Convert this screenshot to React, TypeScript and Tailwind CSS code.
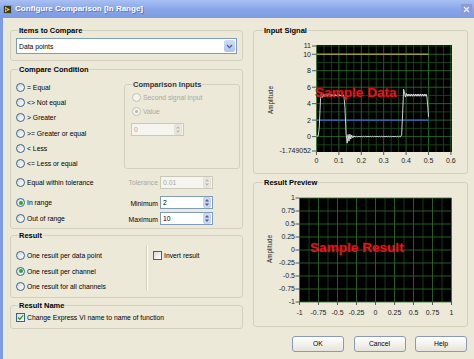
import React from "react";

type RP = { checked?: boolean; disabled?: boolean };

function Radio({ checked = false, disabled = false }: RP) {
  return (
    <span
      className={
        disabled
          ? "w-[9px] h-[9px] rounded-full border border-[#c5c2b3] bg-[#f4f3ee] flex items-center justify-center shrink-0"
          : "w-[9px] h-[9px] rounded-full border border-[#33639a] bg-linear-to-br from-[#d8d7cf] to-white flex items-center justify-center shrink-0"
      }
    >
      {checked && (
        <span
          className={
            disabled
              ? "w-[3px] h-[3px] rounded-full bg-[#b5b3a6]"
              : "w-[4px] h-[4px] rounded-full bg-[#2ea32e]"
          }
        />
      )}
    </span>
  );
}

function Check({ checked = false }: { checked?: boolean }) {
  return (
    <span className="w-[9px] h-[9px] border border-[#33639a] bg-linear-to-br from-[#dcdbd3] to-white flex items-center justify-center shrink-0">
      {checked && (
        <svg width="7" height="7" viewBox="0 0 7 7">
          <path d="M1 3.4 L2.8 5.3 L6.2 1.4" fill="none" stroke="#21a121" strokeWidth="1.4" />
        </svg>
      )}
    </span>
  );
}

function RadioRow({
  label,
  checked,
  disabled,
  cls,
}: {
  label: string;
  checked?: boolean;
  disabled?: boolean;
  cls: string;
}) {
  return (
    <div className={`flex items-center gap-[2px] ${cls}`}>
      <Radio checked={checked} disabled={disabled} />
      <span className={disabled ? "text-[#aca899]" : "text-black"}>{label}</span>
    </div>
  );
}

function SpinArrows({ disabled = false }: { disabled?: boolean }) {
  const bg = disabled ? "#e9e8e0" : "#c9d6f6";
  const fg = disabled ? "#bdbbae" : "#4d6185";
  return (
    <svg width="8" height="11" viewBox="0 0 8 11" className="mr-[1px] shrink-0">
      <rect x="0.5" y="0.5" width="7" height="10" rx="1.5" fill={bg} stroke={disabled ? "#d8d6ca" : "#b3c3ea"} strokeWidth="0.6" />
      <path d="M4 2 L2 4.4 L6 4.4 Z" fill={fg} />
      <path d="M2 6.6 L6 6.6 L4 9 Z" fill={fg} />
    </svg>
  );
}

function Spin({ value, disabled = false, cls }: { value: string; disabled?: boolean; cls: string }) {
  return (
    <div
      className={
        disabled
          ? `flex items-center justify-between h-[13px] border border-[#cbc8b8] bg-[#f5f4ef] text-[#aca899] ${cls}`
          : `flex items-center justify-between h-[13px] border border-[#7f9db9] bg-white text-black ${cls}`
      }
    >
      <span className="pl-[2px] leading-[11px]">{value}</span>
      <SpinArrows disabled={disabled} />
    </div>
  );
}

const legendCls = "ml-[2px] px-[1px] text-[7.5px] leading-[9px] font-bold text-black";

function TitleBar() {
  return (
    <div className="h-[18px] shrink-0 flex items-center bg-linear-to-b from-[#a9c0f3] via-[#8aa6e9] to-[#7d9ae3]">
      <svg width="9" height="9" viewBox="0 0 9 9" className="ml-[3px] shrink-0">
        <rect x="0" y="0" width="9" height="9" fill="#3a3a1e" />
        <rect x="0.5" y="0.5" width="8" height="8" fill="none" stroke="#c8b84a" strokeWidth="0.8" />
        <path d="M2 1.8 L7 4.5 L2 7.2 Z" fill="#f1d52a" />
        <rect x="2.6" y="3.6" width="1.6" height="1.8" fill="#3a3a1e" />
      </svg>
      <span className="ml-[3px] text-[8px] font-bold text-white leading-[10px] [text-shadow:1px_1px_0_#5a76c0]">
        Configure Comparison [In Range]
      </span>
      <div className="ml-auto mr-[2px] w-[11px] h-[11px] rounded-[1px] bg-[#8d9ad8] flex items-center justify-center">
        <svg width="7" height="7" viewBox="0 0 7 7">
          <path d="M1 1 L6 6 M6 1 L1 6" stroke="#eef0fb" strokeWidth="1.2" />
        </svg>
      </div>
    </div>
  );
}

function LeftColumn() {
  return (
    <div className="w-[233px] flex flex-col">
      {/* Items to Compare */}
      <fieldset className="mt-[8px] border border-[#d3d0c2] rounded-[3px] px-[5px] pb-[6px]">
        <legend className={legendCls}>Items to Compare</legend>
        <div className="mt-[3px] h-[16px] border border-[#7f9db9] bg-white flex items-center justify-between">
          <span className="pl-[2px]">Data points</span>
          <div className="mr-[1px] w-[11px] h-[12px] rounded-[2px] bg-linear-to-b from-[#cfdcfa] to-[#aec4f3] flex items-center justify-center">
            <svg width="7" height="5" viewBox="0 0 7 5">
              <path d="M1 1 L3.5 3.6 L6 1" fill="none" stroke="#4d6185" strokeWidth="1.3" />
            </svg>
          </div>
        </div>
      </fieldset>

      {/* Compare Condition */}
      <fieldset className="mt-[4px] border border-[#d3d0c2] rounded-[3px] pl-[5px] pr-[2px] pb-[3px]">
        <legend className={legendCls}>Compare Condition</legend>
        <div className="mt-[6px] flex items-start">
          <div className="w-[108px] flex flex-col">
            <RadioRow cls="h-[15.2px]" label="= Equal" />
            <RadioRow cls="h-[15.2px]" label="<> Not equal" />
            <RadioRow cls="h-[15.2px]" label="> Greater" />
            <RadioRow cls="h-[15.2px]" label=">= Greater or equal" />
            <RadioRow cls="h-[15.2px]" label="< Less" />
            <RadioRow cls="h-[15.2px]" label="<= Less or equal" />
          </div>
          <fieldset className="w-[116px] h-[89px] border border-[#d3d0c2] rounded-[3px] pl-[6px]">
            <legend className="ml-[1px] px-[1px] text-[7.5px] leading-[9px] font-bold text-[#333]">Comparison Inputs</legend>
            <div className="mt-[1px] flex flex-col">
              <RadioRow cls="h-[14.5px] pl-[1px]" label="Second signal input" disabled />
              <RadioRow cls="h-[14.5px] pl-[1px]" label="Value" checked disabled />
            </div>
            <Spin value="0" disabled cls="mt-[4px] w-[53px]" />
          </fieldset>
        </div>
        <div className="mt-[5px] flex flex-col">
          <div className="h-[13px] flex items-center">
            <RadioRow cls="w-[108px] h-[13px]" label="Equal within tolerance" />
            <span className="w-[36px] text-right pr-[2px] text-[#aca899]">Tolerance</span>
            <Spin value="0.01" disabled cls="w-[53px]" />
          </div>
          <div className="mt-[7px] h-[13px] flex items-center">
            <RadioRow cls="w-[108px] h-[13px]" label="In range" checked />
            <span className="w-[36px] text-right pr-[2px] pt-[2px]">Minimum</span>
            <Spin value="2" cls="w-[53px]" />
          </div>
          <div className="mt-[3px] h-[13px] flex items-center">
            <RadioRow cls="w-[108px] h-[13px]" label="Out of range" />
            <span className="w-[36px] text-right pr-[2px] pt-[2px]">Maximum</span>
            <Spin value="10" cls="w-[53px]" />
          </div>
        </div>
      </fieldset>

      {/* Result */}
      <fieldset className="mt-[2px] border border-[#d3d0c2] rounded-[3px] px-[5px] pb-[2px]">
        <legend className={legendCls}>Result</legend>
        <div className="mt-[8px] flex items-start">
          <div className="w-[130px] flex flex-col">
            <RadioRow cls="h-[15.5px]" label="One result per data point" />
            <RadioRow cls="h-[15.5px]" label="One result per channel" checked />
            <RadioRow cls="h-[15.5px]" label="One result for all channels" />
          </div>
          <div className="-mt-[3px] w-[2px] h-[45px] border-l border-l-[#d3d0c2] border-r border-r-white" />
          <div className="ml-[5px] h-[15.5px] flex items-center gap-[2px]">
            <Check />
            <span>Invert result</span>
          </div>
        </div>
      </fieldset>

      {/* Result Name */}
      <fieldset className="mt-[3px] border border-[#d3d0c2] rounded-[3px] px-[5px] pb-[3px]">
        <legend className={legendCls}>Result Name</legend>
        <div className="h-[15px] flex items-center gap-[2px]">
          <Check checked />
          <span>Change Express VI name to name of function</span>
        </div>
      </fieldset>
    </div>
  );
}

const FONT = "Liberation Sans, Arial, sans-serif";

function range(a: number, b: number, step: number) {
  const r: number[] = [];
  for (let v = a; v <= b + 1e-9; v += step) r.push(Number(v.toFixed(6)));
  return r;
}

function InputChart() {
  const X0 = 316.5;
  const xs = (t: number) => X0 + t * 224;
  const ys = (v: number) => 46 + (11 - v) * 8.236;
  const top = 45;
  const bot = 152;
  const right = 452;

  const pts: [number, number][] = [];
  pts.push([0, 0.05], [0.008, 0.1], [0.012, 1], [0.018, 4.6], [0.022, 5.35], [0.026, 4.75]);
  for (let i = 0; i < 23; i++) {
    const t = 0.03 + i * 0.004;
    pts.push([t, 5 + (i % 2 === 0 ? 0.16 : -0.14) * Math.exp(-i / 30)]);
  }
  pts.push([0.123, 4.85], [0.127, 3.5], [0.132, 0.4], [0.137, -0.8], [0.141, 0.25], [0.145, -0.55], [0.149, 0.3], [0.153, -0.3], [0.157, 0.18], [0.162, -0.15], [0.167, 0.1], [0.172, -0.06]);
  for (let i = 0; i < 50; i++) {
    const t = 0.178 + i * 0.004;
    pts.push([t, i % 2 === 0 ? 0.04 : -0.03]);
  }
  pts.push([0.38, 0.2], [0.384, 2.5], [0.389, 5.75], [0.393, 5.3], [0.397, 4.8], [0.401, 5.25]);
  for (let i = 0; i < 22; i++) {
    const t = 0.405 + i * 0.004;
    pts.push([t, 5.05 + (i % 2 === 0 ? -0.15 : 0.12)]);
  }
  pts.push([0.493, 4.8], [0.497, 3.6], [0.5, 2.4]);

  const poly = pts.map(([t, v]) => `${xs(t).toFixed(2)},${ys(v).toFixed(2)}`).join(" ");

  const vLines = range(0, 30, 1);
  const hLines = range(-1, 11, 1);
  const yLabels: [number, string][] = [
    [11, "11"],
    [10, "10"],
    [8, "8"],
    [6, "6"],
    [4, "4"],
    [2, "2"],
    [0, "0"],
    [-1.749052, "-1.749052"],
  ];
  const xLabels = ["0", "0.1", "0.2", "0.3", "0.4", "0.5", "0.6"];

  return (
    <svg width="213" height="138" viewBox="254 35 213 138" className="block">
      <rect x={X0} y={top} width={right - X0} height={bot - top} fill="#000" />
      {vLines.map((k) => {
        const x = X0 + (k * 224) / 30;
        if (x > right) return null;
        return (
          <line key={"v" + k} x1={x} x2={x} y1={top} y2={bot} stroke={k % 3 === 0 ? "#2f7b30" : "#1d4f1e"} strokeWidth="0.8" />
        );
      })}
      {hLines.map((v) => (
        <line key={"h" + v} x1={X0} x2={right} y1={ys(v)} y2={ys(v)} stroke={v % 2 === 0 ? "#2f7b30" : "#1d4f1e"} strokeWidth="0.8" />
      ))}
      <line x1={xs(0)} x2={xs(0.5)} y1={ys(10)} y2={ys(10)} stroke="#9c9a2a" strokeWidth="1.3" />
      <line x1={xs(0)} x2={xs(0.5)} y1={ys(2)} y2={ys(2)} stroke="#3f68c8" strokeWidth="1.2" />
      <polyline points={poly} fill="none" stroke="#e8e8e8" strokeWidth="0.9" />
      {yLabels.map(([v, s]) => (
        <g key={s}>
          <line x1={312} x2={316} y1={ys(v)} y2={ys(v)} stroke="#333" strokeWidth="0.8" />
          <text x={311} y={ys(v) + 2.4} textAnchor="end" fontSize="7" fontFamily={FONT} fill="#222">
            {s}
          </text>
        </g>
      ))}
      {xLabels.map((s, i) => (
        <g key={s}>
          <line x1={xs(i * 0.1)} x2={xs(i * 0.1)} y1={bot} y2={bot + 3} stroke="#333" strokeWidth="0.8" />
          <text x={xs(i * 0.1)} y={162.5} textAnchor="middle" fontSize="7" fontFamily={FONT} fill="#222">
            {s}
          </text>
        </g>
      ))}
      <text x={273} y={100} transform="rotate(-90 273 100)" textAnchor="middle" fontSize="6.3" fontFamily={FONT} fill="#222">
        Amplitude
      </text>
      <text x={315} y={97} fontSize="13.6" fontWeight="bold" fontFamily={FONT} fill="#e8161c" stroke="#b80f14" strokeWidth="0.3">
        Sample Data
      </text>
    </svg>
  );
}

function ResultChart() {
  const L = 299.5;
  const R = 451.5;
  const T = 198;
  const B = 302;
  const xs = (u: number) => L + ((u + 1) * (R - L)) / 2;
  const ys = (v: number) => (T + B) / 2 - (v * (B - T)) / 2;
  const vLines = range(0, 16, 1);
  const hLines = range(0, 8, 1);
  const yLabels = ["1", "0.75", "0.5", "0.25", "0", "-0.25", "-0.5", "-0.75", "-1"];
  const xLabels = ["-1", "-0.75", "-0.5", "-0.25", "0", "0.25", "0.5", "0.75", "1"];
  return (
    <svg width="213" height="139" viewBox="254 187 213 139" className="block">
      <rect x={L} y={T} width={R - L} height={B - T} fill="#000" />
      {vLines.map((k) => {
        const x = L + (k * (R - L)) / 16;
        return <line key={"v" + k} x1={x} x2={x} y1={T} y2={B} stroke={k % 2 === 0 ? "#2c742d" : "#1b4a1c"} strokeWidth="0.8" />;
      })}
      {hLines.map((k) => {
        const y = T + (k * (B - T)) / 8;
        return <line key={"h" + k} x1={L} x2={R} y1={y} y2={y} stroke="#2c742d" strokeWidth="0.8" />;
      })}
      {yLabels.map((s, i) => {
        const y = ys(1 - i * 0.25);
        return (
          <g key={s}>
            <line x1={295.5} x2={299.5} y1={y} y2={y} stroke="#333" strokeWidth="0.8" />
            <text x={295} y={y + 2.4} textAnchor="end" fontSize="7" fontFamily={FONT} fill="#222">
              {s}
            </text>
          </g>
        );
      })}
      {xLabels.map((s, i) => {
        const x = xs(-1 + i * 0.25);
        return (
          <g key={s}>
            <line x1={x} x2={x} y1={B} y2={B + 3} stroke="#333" strokeWidth="0.8" />
            <text x={x} y={314.5} textAnchor="middle" fontSize="7" fontFamily={FONT} fill="#222">
              {s}
            </text>
          </g>
        );
      })}
      <text x={272} y={249} transform="rotate(-90 272 249)" textAnchor="middle" fontSize="6.3" fontFamily={FONT} fill="#222">
        Amplitude
      </text>
      <text x={310} y={252} fontSize="13.6" fontWeight="bold" fontFamily={FONT} fill="#e8161c" stroke="#b80f14" strokeWidth="0.3">
        Sample Result
      </text>
    </svg>
  );
}

function RightColumn() {
  return (
    <div className="w-[215px] flex flex-col">
      <fieldset className="mt-[8px] border border-[#d3d0c2] rounded-[3px]">
        <legend className="ml-[9px] px-[1px] text-[7.5px] leading-[9px] font-bold text-black">Input Signal</legend>
        <InputChart />
      </fieldset>
      <fieldset className="mt-[4px] border border-[#d3d0c2] rounded-[3px]">
        <legend className="ml-[9px] px-[1px] text-[7.5px] leading-[9px] font-bold text-black">Result Preview</legend>
        <ResultChart />
      </fieldset>
    </div>
  );
}

function Btn({ label }: { label: string }) {
  return (
    <div className="w-[52px] h-[16px] rounded-[3px] border border-[#8a99b8] bg-linear-to-b from-white to-[#e6e4da] flex items-center justify-center text-black">
      {label}
    </div>
  );
}

export default function App() {
  return (
    <div className="w-[474px] h-[359px] flex flex-col bg-[#ece9d9] font-['Liberation_Sans',Arial,sans-serif] text-[6.8px] leading-[9px] text-black overflow-hidden">
      <TitleBar />
      <div className="flex-1 flex flex-col border-l-[3px] border-l-[#7f9be2] pl-[7px] pr-[6px]">
        <div className="flex gap-[10px]">
          <LeftColumn />
          <RightColumn />
        </div>
        <div className="mt-[7px] flex justify-end gap-[9.5px] pr-[1px]">
          <Btn label="OK" />
          <Btn label="Cancel" />
          <Btn label="Help" />
        </div>
      </div>
    </div>
  );
}
